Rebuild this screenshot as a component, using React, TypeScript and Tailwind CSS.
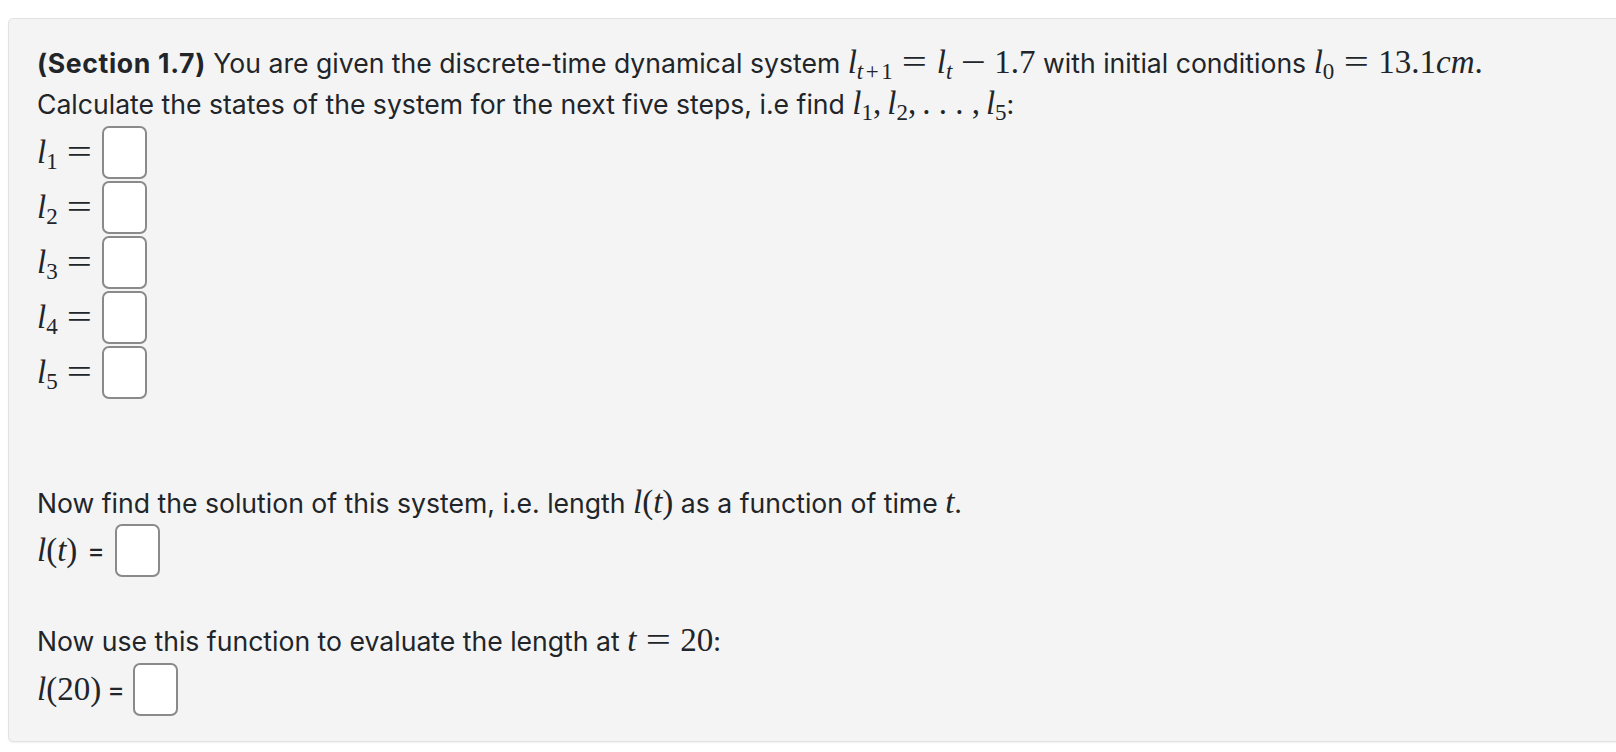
import React from 'react';

const V = ({ children }: { children: React.ReactNode }) => (
  <span className="italic">{children}</span>
);

const Sub = ({ children }: { children: React.ReactNode }) => (
  <sub className="text-[23px] not-italic">{children}</sub>
);

const M = ({ children }: { children: React.ReactNode }) => (
  <span className="font-['Liberation_Serif',serif] text-[33px] leading-none">{children}</span>
);

// relation / binary operator, widened to the Computer Modern width
const Op = ({ children, rel = true }: { children: React.ReactNode; rel?: boolean }) => (
  <span className={`inline-block w-[26px] text-center ${rel ? 'mx-[9px]' : 'mx-[8px]'}`}>
    <span className="inline-block scale-x-[1.35]">{children}</span>
  </span>
);

const Box = () => (
  <span className="inline-block w-[45px] h-[53px] bg-white border-2 border-[#8a8a8a] rounded-[7px]" />
);

export default function App() {
  const rows = [1, 2, 3, 4, 5];
  return (
    <div className="min-h-screen bg-white overflow-hidden font-['Inter','Liberation_Sans',sans-serif] text-[#212529]">
      <div className="ml-2 mt-[18px] w-[1640px] h-[724px] bg-[#f4f4f4] border border-[#e2e2e2] rounded-[5px] shadow-[0_1px_2px_rgba(0,0,0,0.06)] pl-7 pt-[24px] text-[26.6px]">
        <div className="leading-[41px] whitespace-nowrap">
          <b className="tracking-[0.025em]">(Section 1.7)</b> You are given the discrete-time dynamical system{' '}
          <M>
            <V>l</V>
            <Sub>
              <V>t</V>
              <span className="inline-block w-[18px] text-center">+</span>1
            </Sub>
            <Op>=</Op>
            <V>l</V>
            <Sub>
              <V>t</V>
            </Sub>
            <Op rel={false}>−</Op>1.7
          </M>{' '}
          with initial conditions{' '}
          <M>
            <V>l</V>
            <Sub>0</Sub>
            <Op>=</Op>13.1<V>cm</V>.
          </M>
        </div>
        <div className="leading-[41px] whitespace-nowrap">
          Calculate the states of the system for the next five steps, i.e find{' '}
          <M>
            <V>l</V>
            <Sub>1</Sub>,<span className="ml-[6px]" />
            <V>l</V>
            <Sub>2</Sub>,<span className="ml-[6px]" />. . . ,<span className="ml-[6px]" />
            <V>l</V>
            <Sub>5</Sub>
          </M>
          :
        </div>
        <div className="flex flex-col">
          {rows.map((n) => (
            <div key={n} className="h-[55px] flex items-center">
              <M>
                <V>l</V>
                <Sub>{n}</Sub>
                <Op>=</Op>
              </M>
              <Box />
            </div>
          ))}
        </div>
        <div className="mt-[85px] leading-[36px] whitespace-nowrap">
          Now find the solution of this system, i.e. length{' '}
          <M>
            <V>l</V>(<V>t</V>)
          </M>{' '}
          as a function of time <M><V>t</V></M>.
        </div>
        <div className="mt-[2px] h-[55px] flex items-center">
          <M>
            <V>l</V>(<V>t</V>)
          </M>
          <span className="ml-[10px] mr-[10px]">=</span>
          <Box />
        </div>
        <div className="mt-[45px] leading-[36px] whitespace-nowrap">
          Now use this function to evaluate the length at{' '}
          <M>
            <V>t</V>
            <Op>=</Op>20
          </M>
          :
        </div>
        <div className="mt-[3px] h-[55px] flex items-center">
          <M>
            <V>l</V>(20)
          </M>
          <span className="ml-[6px] mr-[8px]">=</span>
          <Box />
        </div>
      </div>
    </div>
  );
}
